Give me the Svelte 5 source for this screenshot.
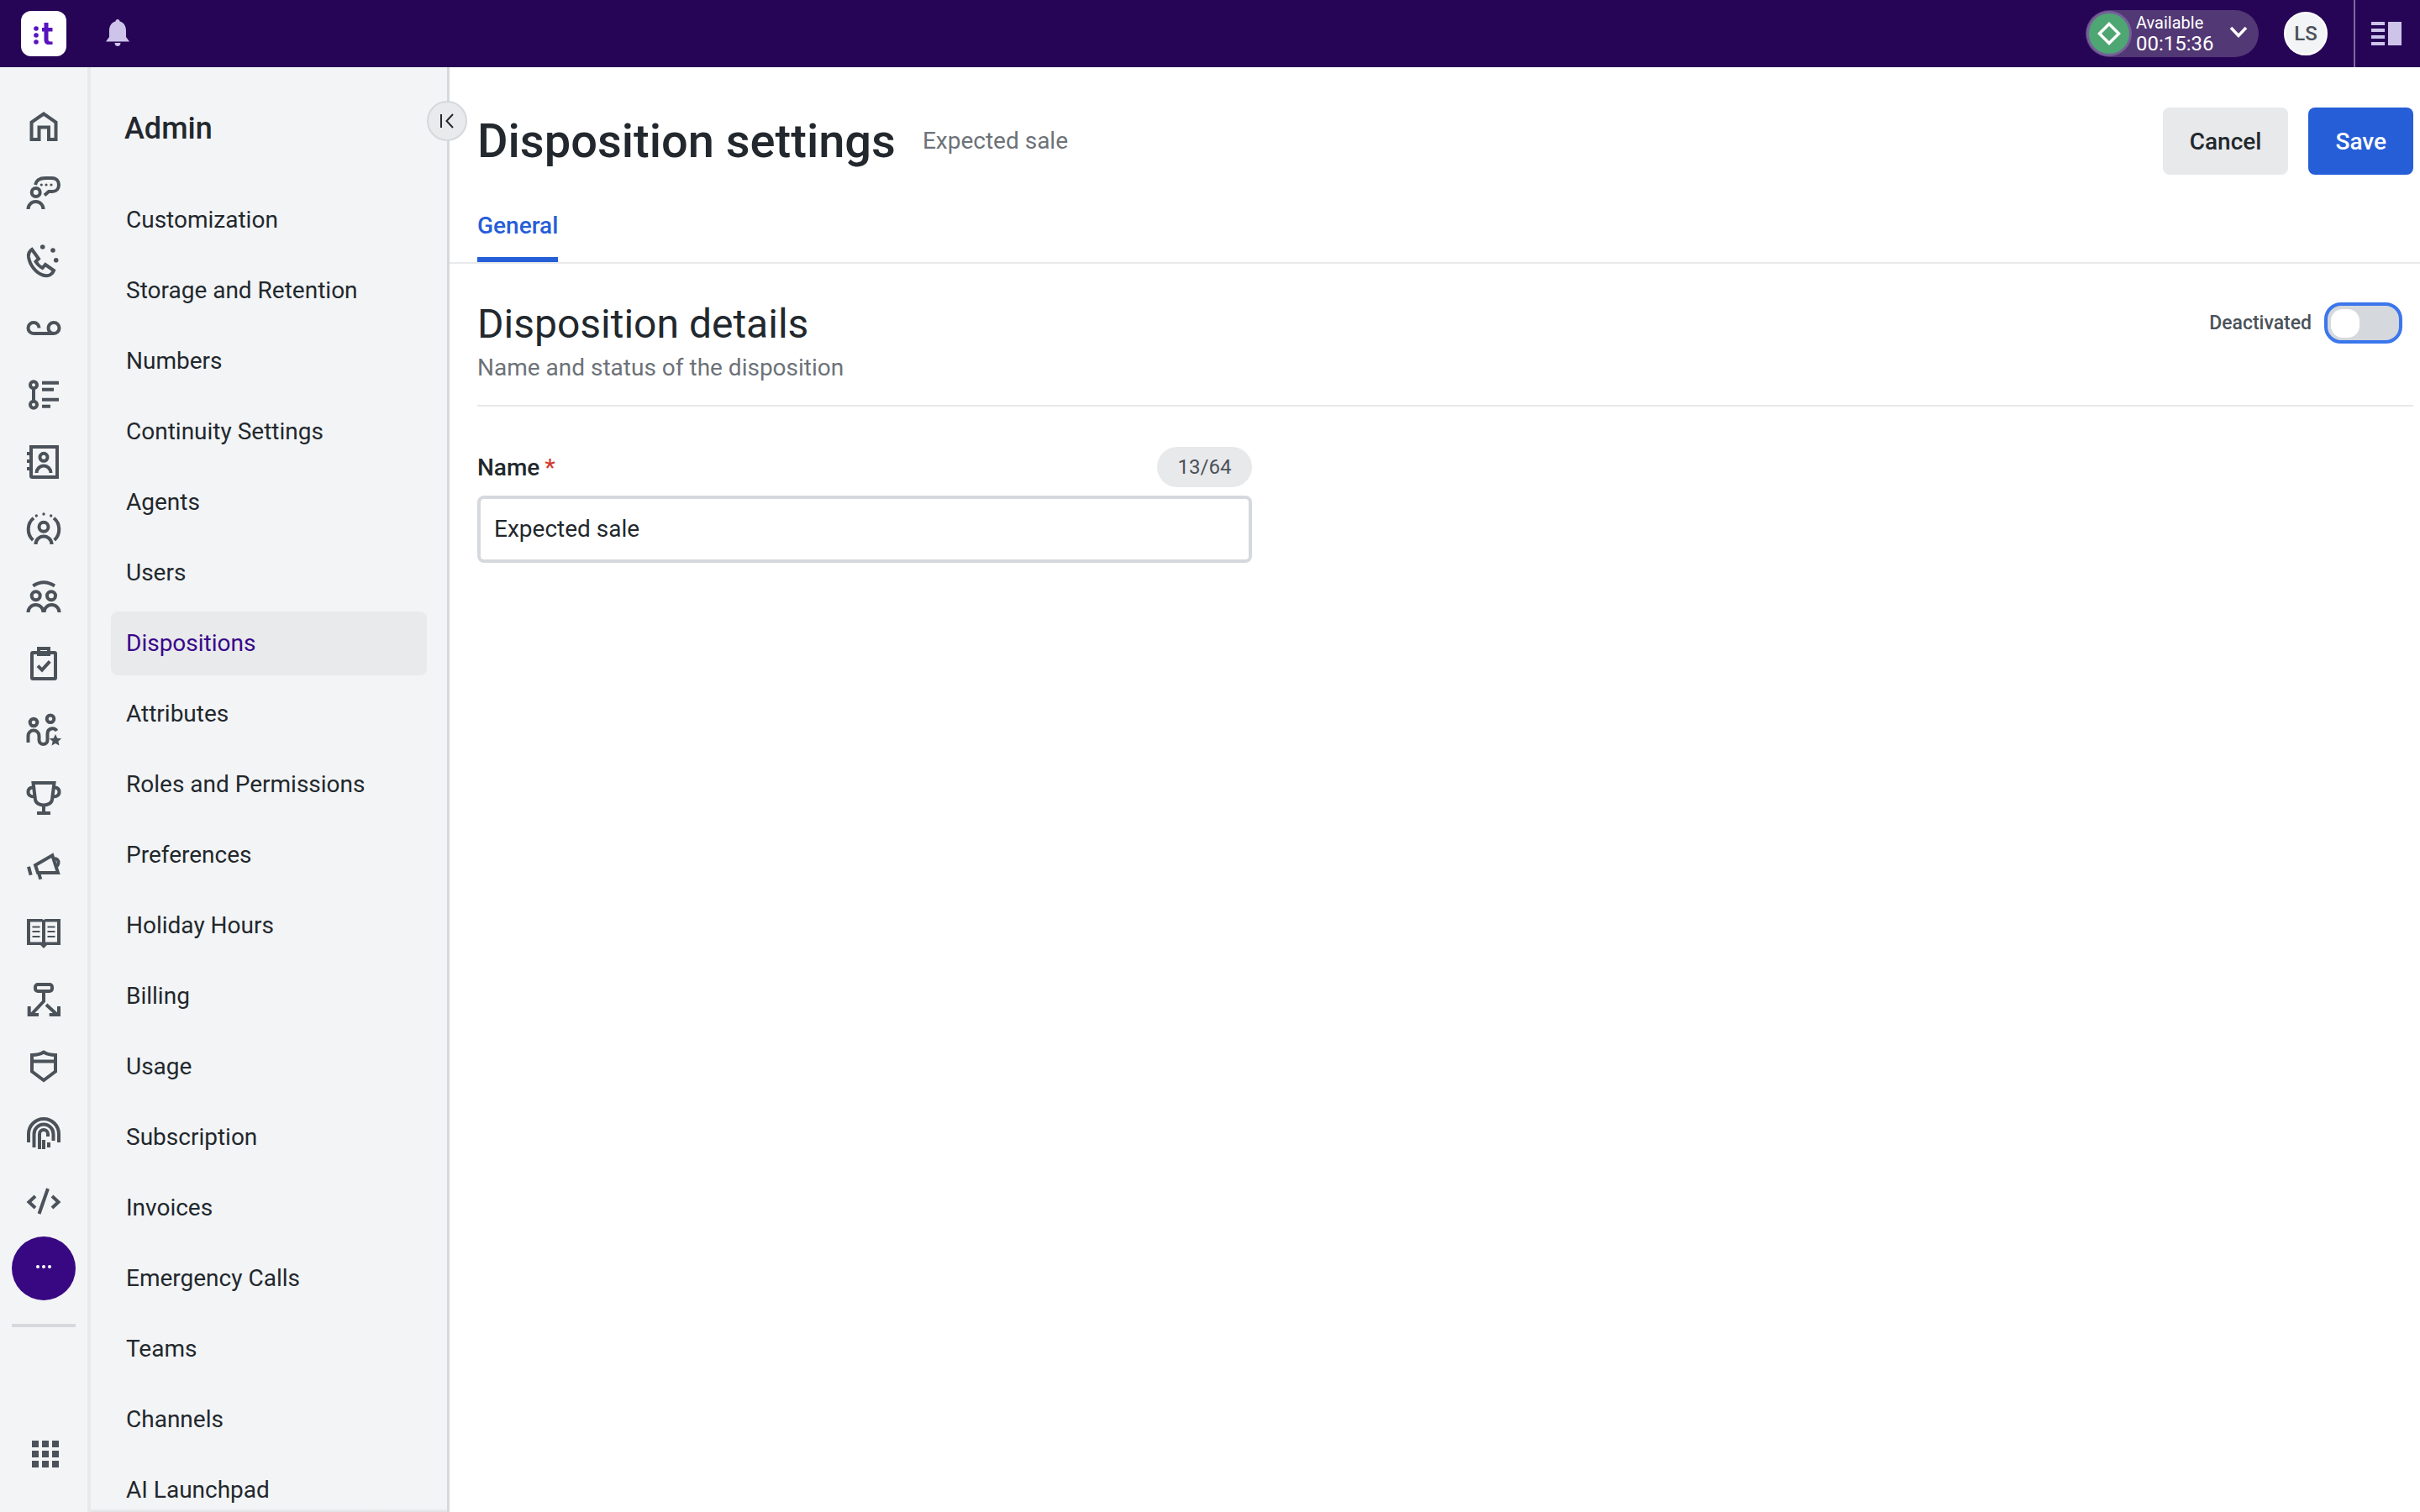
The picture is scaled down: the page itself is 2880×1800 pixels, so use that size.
<script>
    const navItems = [
        "Customization", "Storage and Retention", "Numbers", "Continuity Settings", "Agents", "Users",
        "Dispositions", "Attributes", "Roles and Permissions", "Preferences", "Holiday Hours", "Billing",
        "Usage", "Subscription", "Invoices", "Emergency Calls", "Teams", "Channels", "AI Launchpad"
    ];

    // rail icons, all drawn in a 40x40 box
    const railIcons = [
        `<path d="M5.500 36V15.500L20 5.500l14.500 10V36H26V21.500H14.500V36z"/>`,
        `<circle cx="10.700" cy="19" r="5"/><path d="M1.500 39a9 9 0 0 1 18 0"/><path d="M10 10C11 5 15 2 22 2h8c5 0 8 3.500 8 8s-3 8-7.500 8H26l-5 4.500"/><g class="solid"><circle cx="17.300" cy="10" r="1.600"/><circle cx="23" cy="10" r="1.600"/><circle cx="29" cy="10" r="1.600"/></g>`,
        `<path d="M6 7l8 11-3.500 3.500c2 3 5 6 8 7.500l3.500-4 10 7c-2 5-7 7.500-13 5.500C11 35 3.500 26 2 16c-.500-4 1-7 4-9z"/><g class="solid"><circle cx="18.700" cy="4" r="2.800"/><circle cx="31" cy="8" r="2.800"/><circle cx="34.700" cy="19.700" r="2.800"/></g>`,
        `<path d="M8 27a6.500 6.500 0 1 1 6.500-6.500"/><circle cx="32" cy="20.500" r="6.500"/><path d="M8 27h24"/>`,
        `<circle cx="8" cy="8.300" r="4"/><circle cx="8" cy="31.700" r="4"/><path d="M8 12v16M18 5.700h20M18 13.700h14M18 25.700h20M18 33.700h10"/>`,
        `<path d="M5 2h31v36H6.500A1.500 1.500 0 0 1 5 36.500z"/><path d="M0 10h7M0 19h7M0 28h7"/><circle cx="20" cy="14.300" r="4.500"/><path d="M11.500 33a8.500 8.500 0 0 1 17 0"/>`,
        `<circle cx="20" cy="17.300" r="5.500"/><path d="M10.500 38a9.500 9.500 0 0 1 19 0"/><path d="M8 6.700C0 13-.5 26 7.300 33M32 6.700c8 6.300 8.500 19.300.7 26.300"/><g class="solid"><circle cx="11.300" cy="4" r="1.700"/><circle cx="20" cy="2" r="1.700"/><circle cx="28.700" cy="4" r="1.700"/></g>`,
        `<path d="M7.300 7.500Q20-1 33 7.500"/><circle cx="10.700" cy="19.300" r="5"/><circle cx="29" cy="19.300" r="5"/><path d="M1.500 39a9 9 0 0 1 18 0M20.500 39a9 9 0 0 1 18 0"/>`,
        `<rect x="6" y="7" width="28" height="31" rx="1"/><rect x="14" y="2" width="12" height="7"/><path d="M13 22.700l5 5 9.300-10.400"/>`,
        `<circle cx="8" cy="10" r="4.300"/><circle cx="28" cy="5.700" r="4.300"/><path d="M1.500 34v-8a6.500 6.500 0 0 1 13 0v5a5 5 0 0 0 10 0v-8a6 6 0 0 1 11-3"/><path class="solid" d="M34 24l2.200 4.700 5 .5-3.800 3.300 1.100 5-4.500-2.600-4.500 2.600 1.100-5-3.800-3.300 5-.5z"/>`,
        `<path d="M7.500 2h25l-2.500 20c-.5 4-5 6.500-10 6.500S10.500 26 10 22z"/><path d="M7 7.500C3 7.500 1.500 10 1.500 13c0 4 4 6 8 5M33 7.500c4 0 5.500 2.500 5.500 5.500 0 4-4 6-8 5M20 28v10M12 38h16"/>`,
        `<path d="M10 20L30.300 8.300 37 29H13z"/><path d="M32 12.500c4-1 6 2 5.500 5s-2 4-4 4M2 21.700l2.700 10M14 29l2.300 7.700"/>`,
        `<path class="solid" d="M0 4h17c1.500 0 2.500.5 3 1.500.5-1 1.500-1.500 3-1.500h17v31H24l-4 4-4-4H0zM4 7.500v24h14v-24zm18 0v24h14v-24z"/><path class="thin" d="M6.500 13.500h9M6.500 19h9M6.500 25h9M24.500 13.500h9M24.500 19h9M24.500 25h9"/>`,
        `<rect x="10" y="2" width="20" height="8" rx="3"/><path d="M20 10v12L5 38M23 26l13 12M2.700 28v10h11.300M38 28v10H26.700"/>`,
        `<path d="M6 6c5 0 10-1 14-3.500C24 5 29 6 34 6v19.500L20 36 6 25.500zM6 13.500h28"/>`,
        `<path d="M2 30V20a18 18 0 0 1 36 0v10M8.500 36V20a11.500 11.500 0 0 1 23 0v8M15 38V20a5 5 0 0 1 10 0v3M20 27v11M26 30v6"/>`,
        `<path d="M10 14l-7.500 7 7.500 7M30 14l7.500 7-7.500 7M25 5l-10.500 30"/>`
    ];
</script>

<div class="app">
    <header class="topbar">
        <div class="logo">
            <svg width="54" height="54" viewBox="0 0 54 54">
                <g fill="#5714bc">
                    <circle cx="18" cy="21" r="2.800"/>
                    <circle cx="18" cy="29" r="2.800"/>
                    <circle cx="18" cy="37" r="2.800"/>
                    <path d="M27.500 14h5v6h5v4.500h-5V34c0 1.700.8 2.500 2.500 2.500h2.500V40H33c-3.700 0-5.500-2-5.500-5.500v-10h-2.500V20h2.500z"/>
                </g>
            </svg>
        </div>
        <svg class="bell" width="28" height="34" viewBox="0 0 28 34">
            <path fill="#cec4ea" d="M14 0c1.500 0 2.500 1 2.500 2.500 5 1.300 7.500 5.500 7.500 11V21l4 5.500H0L4 21v-7.500C4 8 6.500 3.800 11.500 2.500 11.500 1 12.500 0 14 0zM10.500 28h7c0 2.500-1.500 4-3.500 4s-3.500-1.500-3.500-4z"/>
        </svg>

        <div class="status">
            <span class="status-dot">
                <svg width="28" height="28" viewBox="0 0 28 28"><path d="M14 2.500L25.500 14 14 25.500 2.500 14z" fill="none" stroke="#fff" stroke-width="3.500"/></svg>
            </span>
            <span class="status-text">
                <span class="status-label">Available</span>
                <span class="status-time">00:15:36</span>
            </span>
            <svg class="chevron" width="22" height="14" viewBox="0 0 22 14"><path d="M2 2l9 9.500L20 2" fill="none" stroke="#fff" stroke-width="3.500"/></svg>
        </div>
        <div class="avatar">LS</div>
        <div class="panel-toggle">
            <svg width="36" height="28" viewBox="0 0 36 28" fill="#cec4ea">
                <rect x="0" y="0" width="16" height="4"/>
                <rect x="0" y="8" width="16" height="4"/>
                <rect x="0" y="16" width="16" height="4"/>
                <rect x="0" y="24" width="16" height="4"/>
                <rect x="20" y="0" width="16" height="28"/>
            </svg>
        </div>
    </header>

    <div class="body">
        <nav class="rail">
            {#each railIcons as icon}
                <div class="rail-item">
                    <svg class="rail-icon" width="40" height="40" viewBox="0 0 40 40">{@html icon}</svg>
                </div>
            {/each}
            <div class="more"><span></span><span></span><span></span></div>
            <div class="rail-divider"></div>
            <div class="apps">
                {#each Array(9) as _}<span></span>{/each}
            </div>
        </nav>

        <aside class="sidebar">
            <h2>Admin</h2>
            <ul>
                {#each navItems as item}
                    <li class:active={item === "Dispositions"}>{item}</li>
                {/each}
            </ul>
            <div class="scroll-shade"></div>
            <button class="collapse" aria-label="Collapse">
                <svg width="18" height="18" viewBox="0 0 18 18"><path d="M2 1v16M16 1L8.500 9l7.500 8" fill="none" stroke="#22282d" stroke-width="2"/></svg>
            </button>
        </aside>

        <main class="main">
            <div class="page-head">
                <div class="title-row">
                    <h1>Disposition settings</h1>
                    <span class="crumb">Expected sale</span>
                    <div class="actions">
                        <button class="btn cancel">Cancel</button>
                        <button class="btn save">Save</button>
                    </div>
                </div>
                <div class="tabs"><span class="tab">General</span></div>
            </div>

            <section class="details">
                <div class="section-head">
                    <div>
                        <h3>Disposition details</h3>
                        <p>Name and status of the disposition</p>
                    </div>
                    <div class="switch-wrap">
                        <span>Deactivated</span>
                        <span class="switch"><span class="knob"></span></span>
                    </div>
                </div>

                <div class="field">
                    <div class="field-head">
                        <label for="name">Name<em>*</em></label>
                        <span class="count">13/64</span>
                    </div>
                    <input id="name" type="text" value="Expected sale" />
                </div>
            </section>
        </main>
    </div>
</div>

<style>
    :global(body) {
        margin: 0;
        background: #fff;
    }

    .app {
        width: 2880px;
        height: 1800px;
        display: flex;
        flex-direction: column;
        overflow: hidden;
        font-family: Roboto, "Liberation Sans", sans-serif;
        font-size: 28px;
        color: #22282d;
    }

    .topbar {
        height: 80px;
        flex: none;
        display: flex;
        align-items: center;
        padding-left: 25px;
        background: #260456;
    }

    .logo {
        width: 54px;
        height: 54px;
        border-radius: 12px;
        background: #fff;
    }

    .bell {
        margin-left: 47px;
    }

    .status {
        margin-left: auto;
        width: 206px;
        height: 56px;
        box-sizing: border-box;
        display: flex;
        align-items: center;
        border-radius: 28px;
        background: #523874;
        padding-left: 4px;
    }

    .status-dot {
        width: 48px;
        height: 48px;
        flex: none;
        display: flex;
        align-items: center;
        justify-content: center;
        border-radius: 50%;
        background: #4ea672;
        box-shadow: 0 0 0 3px #75609a;
    }

    .status-text {
        width: 100px;
        flex: none;
        display: flex;
        flex-direction: column;
        margin-left: 8px;
        color: #fff;
    }

    .status-label {
        font-size: 20px;
        line-height: 25px;
    }

    .status-time {
        font-size: 24px;
        line-height: 25px;
    }

    .chevron {
        margin-left: 11px;
        margin-top: -4px;
    }

    .avatar {
        width: 52px;
        height: 52px;
        box-sizing: border-box;
        margin-left: 30px;
        display: flex;
        align-items: center;
        justify-content: center;
        border: 2px solid #fff;
        border-radius: 50%;
        background: #f3f4f6;
        color: #4b5259;
        font-size: 24px;
        font-weight: 500;
    }

    .panel-toggle {
        width: 79px;
        height: 80px;
        margin-left: 31px;
        box-sizing: border-box;
        display: flex;
        align-items: center;
        padding-left: 19px;
        border-left: 2px solid #7c6a9a;
    }

    .body {
        flex: 1;
        display: flex;
        min-height: 0;
    }

    .rail {
        width: 108px;
        flex: none;
        box-sizing: border-box;
        display: flex;
        flex-direction: column;
        align-items: center;
        padding: 30px 0 53px;
        background: #f3f4f6;
        border-right: 4px solid #e8e9eb;
    }

    .rail-item {
        height: 80px;
        width: 100%;
        flex: none;
        display: flex;
        align-items: center;
        justify-content: center;
    }

    .rail-icon {
        overflow: visible;
        fill: none;
        stroke: #4b5259;
        stroke-width: 4;
    }

    .rail-icon :global(.solid) {
        fill: #4b5259;
        stroke: none;
    }

    .rail-icon :global(.thin) {
        stroke-width: 2;
    }

    .more {
        width: 76px;
        height: 76px;
        flex: none;
        margin-top: 2px;
        display: flex;
        align-items: center;
        justify-content: center;
        gap: 3px;
        padding-bottom: 4px;
        box-sizing: border-box;
        border-radius: 50%;
        background: #380883;
    }

    .more span {
        width: 4px;
        height: 4px;
        border-radius: 50%;
        background: #fff;
    }

    .rail-divider {
        width: 76px;
        height: 4px;
        flex: none;
        margin-top: 28px;
        background: #d5d8dc;
    }

    .apps {
        margin-top: auto;
        display: grid;
        grid-template-columns: repeat(3, 8px);
        grid-auto-rows: 8px;
        gap: 4px;
        transform: translateX(2px);
    }

    .apps span {
        background: #4b5259;
    }

    .sidebar {
        position: relative;
        width: 427px;
        flex: none;
        box-sizing: border-box;
        background: #f3f4f6;
        border-right: 3px solid #d5d8dc;
        padding: 51px 24px 0;
    }

    .sidebar h2 {
        margin: 0;
        padding-left: 16px;
        height: 93px;
        font-size: 36px;
        line-height: 44px;
        font-weight: 500;
    }

    ul {
        list-style: none;
        margin: 0;
        padding: 0;
        display: flex;
        flex-direction: column;
        gap: 8px;
    }

    li {
        height: 76px;
        flex: none;
        width: 376px;
        box-sizing: border-box;
        display: flex;
        align-items: center;
        padding: 0 0 2px 18px;
        border-radius: 8px;
    }

    li.active {
        background: #e9eaec;
        color: #38088a;
    }

    .scroll-shade {
        position: absolute;
        left: 0;
        right: 0;
        bottom: 0;
        height: 4px;
        background: linear-gradient(transparent, #dfe1e4);
    }

    .collapse {
        position: absolute;
        top: 40px;
        right: -24px;
        width: 48px;
        height: 48px;
        padding: 0;
        display: flex;
        align-items: center;
        justify-content: center;
        border: 2px solid #d5d8dc;
        border-radius: 50%;
        background: #e9eaec;
    }

    .main {
        flex: 1;
        min-width: 0;
    }

    .page-head {
        padding-top: 48px;
        border-bottom: 2px solid #e8e9eb;
    }

    .title-row {
        display: flex;
        align-items: center;
        height: 80px;
        padding: 0 8px 0 33px;
    }

    h1 {
        margin: 0;
        font-size: 56px;
        font-weight: 500;
        line-height: 80px;
    }

    .crumb {
        margin-left: 32px;
        padding-bottom: 1px;
        color: #6c7278;
    }

    .actions {
        margin-left: auto;
        display: flex;
        gap: 24px;
    }

    .btn {
        height: 80px;
        padding: 0 32px;
        border: 0;
        border-radius: 8px;
        font: 500 28px Roboto, sans-serif;
    }

    .cancel {
        background: #e8e9eb;
        color: #22282d;
    }

    .save {
        background: #265ed7;
        color: #fff;
    }

    .tabs {
        display: flex;
        height: 104px;
        padding-left: 33px;
    }

    .tab {
        display: flex;
        align-items: flex-start;
        padding-top: 44px;
        box-sizing: border-box;
        border-bottom: 6px solid #265ed7;
        color: #265ed7;
        font-weight: 500;
    }

    .details {
        padding: 0 8px 0 33px;
    }

    .section-head {
        height: 170px;
        box-sizing: border-box;
        display: flex;
        justify-content: space-between;
        align-items: flex-start;
        padding-top: 42px;
        border-bottom: 2px solid #e8e9eb;
    }

    h3 {
        margin: 0;
        font-size: 48px;
        font-weight: 400;
        line-height: 60px;
    }

    .section-head p {
        margin: 4px 0 0;
        line-height: 36px;
        color: #6c7278;
    }

    .switch-wrap {
        display: flex;
        align-items: center;
        gap: 15px;
        padding: 4px 13px 0 0;
        font-size: 23px;
        font-weight: 500;
        color: #4b5259;
    }

    .switch {
        width: 93px;
        height: 49px;
        box-sizing: border-box;
        display: flex;
        align-items: center;
        padding-left: 4px;
        border: 4px solid #3b76ec;
        border-radius: 20px;
        background: #d5d8dc;
    }

    .knob {
        width: 34px;
        height: 34px;
        border-radius: 14px;
        background: #fff;
    }

    .field {
        width: 922px;
        margin-top: 48px;
    }

    .field-head {
        display: flex;
        align-items: center;
        justify-content: space-between;
        height: 48px;
        margin-bottom: 10px;
    }

    label {
        font-weight: 500;
    }

    label em {
        margin-left: 6px;
        font-style: normal;
        color: #d13b2f;
    }

    .count {
        width: 113px;
        height: 48px;
        display: flex;
        align-items: center;
        justify-content: center;
        border-radius: 24px;
        background: #e8e9eb;
        color: #4b5259;
        font-size: 24px;
    }

    input {
        display: block;
        width: 100%;
        height: 80px;
        box-sizing: border-box;
        padding: 0 16px 2px;
        border: 4px solid #d5d8dc;
        border-radius: 8px;
        outline: none;
        font: 400 28px Roboto, sans-serif;
        color: #22282d;
    }
</style>
